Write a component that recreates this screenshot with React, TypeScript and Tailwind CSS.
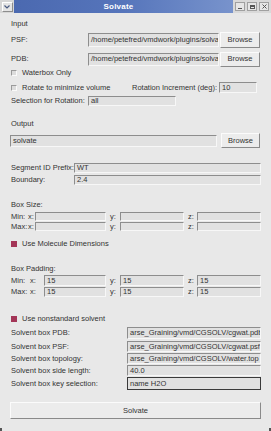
import React from 'react'

const font = { fontFamily: '"Liberation Sans", Arial, sans-serif' }

function Field({ value = '', className = '', focused = false }: { value?: string; className?: string; focused?: boolean }) {
  return (
    <div
      className={`flex items-center overflow-hidden whitespace-nowrap bg-[#e1e1e1] pl-[2px] text-[7.5px] leading-none text-[#333] ${
        focused
          ? 'border border-[#3a3a3a]'
          : 'border border-t-[#8d8d8d] border-l-[#8d8d8d] border-b-[#f7f7f7] border-r-[#f7f7f7]'
      } ${className}`}
    >
      {value}
    </div>
  )
}

function Button({ label, className = '' }: { label: string; className?: string }) {
  return (
    <div
      className={`flex items-center justify-center bg-[#ececec] text-[7.5px] leading-none text-[#333] border border-t-[#fbfbfb] border-l-[#fbfbfb] border-b-[#8a8a8a] border-r-[#8a8a8a] ${className}`}
    >
      {label}
    </div>
  )
}

function Check({ checked, label, className = '' }: { checked: boolean; label: string; className?: string }) {
  return (
    <div className={`flex items-center h-[10px] ${className}`}>
      <div
        className={`w-[6px] h-[6px] ml-[1px] ${
          checked
            ? 'bg-[#a33557]'
            : 'bg-[#dcdcdc] border border-t-[#9a9a9a] border-l-[#9a9a9a] border-b-[#fafafa] border-r-[#fafafa]'
        }`}
      />
      <span className="ml-[5px] text-[7.5px] leading-none text-[#333]">{label}</span>
    </div>
  )
}

function Label({ children, className = '' }: { children: React.ReactNode; className?: string }) {
  return <span className={`text-[7.5px] leading-none text-[#333] whitespace-nowrap ${className}`}>{children}</span>
}

function XYZRow({ label, values, padded }: { label: string; values: string[]; padded?: boolean }) {
  return (
    <div className="flex items-center h-full">
      <Label className="w-[17px]">{label}</Label>
      <Label className={`w-[6px] ${padded ? 'ml-[2px]' : ''}`}>x:</Label>
      <Field value={values[0]} className={`h-full ${padded ? 'ml-[8px] w-[62px]' : 'ml-[1px] w-[71px]'}`} />
      <Label className="ml-[4px] w-[10px]">y:</Label>
      <Field value={values[1]} className="h-full w-[64px]" />
      <Label className="ml-[4px] w-[9px]">z:</Label>
      <Field value={values[2]} className="h-full w-[64px]" />
    </div>
  )
}

export default function App() {
  return (
    <div className="w-[271px] h-[431px] bg-[#e8e8e8] flex flex-col overflow-hidden" style={font}>
      {/* title bar */}
      <div className="h-[13px] flex shrink-0">
        <div className="w-[14px] bg-[#d6d6d6] flex items-center justify-center">
          <div className="w-[11px] h-[10px] bg-[#e4e4e4] border border-t-white border-l-white border-b-[#8c8c8c] border-r-[#8c8c8c] flex items-center justify-center">
            <svg width="6" height="4" viewBox="0 0 6 4">
              <path d="M0.5 0.5 L3 3 L5.5 0.5" fill="none" stroke="#4a5a80" strokeWidth="1.2" />
            </svg>
          </div>
        </div>
        <div className="flex-1 bg-gradient-to-r from-[#4b69b0] via-[#5675bb] to-[#7893cc] flex items-center justify-center">
          <span className="text-[8px] leading-none text-white font-bold tracking-[0.2px] mr-[10px]">Solvate</span>
        </div>
        <div className="w-[38px] bg-[#d9d9d9] flex items-center justify-center gap-[2px]">
          <div className="w-[10px] h-[9px] bg-[#e6e6e6] border border-[#a0a0a0] flex items-end justify-center pb-[1px]">
            <div className="w-[4px] h-[1px] bg-[#555]" />
          </div>
          <div className="w-[10px] h-[9px] bg-[#e6e6e6] border border-[#a0a0a0] flex items-center justify-center">
            <div className="w-[5px] h-[4px] border border-[#555] border-t-2" />
          </div>
          <div className="w-[10px] h-[9px] bg-[#e6e6e6] border border-[#a0a0a0] flex items-center justify-center">
            <svg width="5" height="5" viewBox="0 0 5 5">
              <path d="M0.5 0.5 L4.5 4.5 M4.5 0.5 L0.5 4.5" stroke="#555" strokeWidth="1" />
            </svg>
          </div>
        </div>
      </div>

      {/* body */}
      <div className="flex flex-col pl-[10px] pr-[10px]">
        <div className="h-[10px] mt-[6px] flex items-center pl-[1px]">
          <Label>Input</Label>
        </div>

        <div className="h-[16px] mt-[3px] flex items-center">
          <Label className="w-[78px] pl-[1px]">PSF:</Label>
          <Field value="/home/petefred/vmdwork/plugins/solvate" className="w-[131px] h-[14px]" />
          <Button label="Browse" className="ml-[1px] w-[40px] h-[16px]" />
        </div>

        <div className="h-[16px] mt-[3px] flex items-center">
          <Label className="w-[78px] pl-[1px]">PDB:</Label>
          <Field value="/home/petefred/vmdwork/plugins/solvate" className="w-[131px] h-[13px]" />
          <Button label="Browse" className="ml-[1px] w-[40px] h-[15px]" />
        </div>

        <Check checked={false} label="Waterbox Only" className="mt-[1px]" />

        <div className="h-[11px] mt-[4px] flex items-center">
          <Check checked={false} label="Rotate to minimize volume" className="w-[122px]" />
          <Label className="w-[87px]">Rotation Increment (deg):</Label>
          <Field value="10" className="w-[38px] h-[11px]" />
        </div>

        <div className="h-[11px] mt-[2px] flex items-center">
          <Label className="w-[78px] pl-[1px]">Selection for Rotation:</Label>
          <Field value="all" className="w-[88px] h-[10px]" />
        </div>

        <div className="h-[10px] mt-[13px] flex items-center pl-[1px]">
          <Label>Output</Label>
        </div>

        <div className="h-[15px] mt-[4px] flex items-center">
          <Field value="solvate" className="w-[207px] h-[12px]" />
          <Button label="Browse" className="ml-[4px] w-[39px] h-[15px]" />
        </div>

        <div className="h-[10px] mt-[15px] flex items-center">
          <Label className="w-[64px] pl-[1px]">Segment ID Prefix:</Label>
          <Field value="WT" className="w-[187px] h-[10px]" />
        </div>
        <div className="h-[10px] mt-[2px] flex items-center">
          <Label className="w-[64px] pl-[1px]">Boundary:</Label>
          <Field value="2.4" className="w-[187px] h-[10px]" />
        </div>

        <div className="h-[10px] mt-[15px] flex items-center pl-[1px]">
          <Label>Box Size:</Label>
        </div>
        <div className="h-[9px] mt-[2px] pl-[1px]">
          <XYZRow label="Min:" values={['', '', '']} />
        </div>
        <div className="h-[9px] mt-[1px] pl-[1px]">
          <XYZRow label="Max:" values={['', '', '']} />
        </div>

        <Check checked={true} label="Use Molecule Dimensions" className="mt-[8px]" />

        <div className="h-[10px] mt-[15px] flex items-center pl-[1px]">
          <Label>Box Padding:</Label>
        </div>
        <div className="h-[11px] mt-[1px] pl-[1px]">
          <XYZRow label="Min:" values={['15', '15', '15']} padded />
        </div>
        <div className="h-[10px] mt-[1px] pl-[1px]">
          <XYZRow label="Max:" values={['15', '15', '15']} padded />
        </div>

        <Check checked={true} label="Use nonstandard solvent" className="mt-[17px]" />

        <div className="h-[12px] mt-[3px] flex items-center">
          <Label className="w-[117px] pl-[1px]">Solvent box PDB:</Label>
          <Field value="arse_Graining/vmd/CGSOLV/cgwat.pdb" className="w-[134px] h-[12px]" />
        </div>
        <div className="h-[11px] mt-[2px] flex items-center">
          <Label className="w-[117px] pl-[1px]">Solvent box PSF:</Label>
          <Field value="arse_Graining/vmd/CGSOLV/cgwat.psf" className="w-[134px] h-[11px]" />
        </div>
        <div className="h-[11px] mt-[1px] flex items-center">
          <Label className="w-[117px] pl-[1px]">Solvent box topology:</Label>
          <Field value="arse_Graining/vmd/CGSOLV/water.top" className="w-[134px] h-[11px]" />
        </div>
        <div className="h-[11px] mt-[1px] flex items-center">
          <Label className="w-[117px] pl-[1px]">Solvent box side length:</Label>
          <Field value="40.0" className="w-[134px] h-[11px]" />
        </div>
        <div className="h-[13px] mt-[1px] flex items-center">
          <Label className="w-[117px] pl-[1px]">Solvent box key selection:</Label>
          <Field value="name H2O" focused className="w-[134px] h-[13px]" />
        </div>

        <Button label="Solvate" className="mt-[12px] w-[251px] h-[17px]" />
      </div>

      <div className="mt-auto h-[3px] flex justify-between">
        <div className="w-[2px] h-[3px] bg-[#555]" />
        <div className="w-[2px] h-[3px] bg-[#555]" />
      </div>
    </div>
  )
}
